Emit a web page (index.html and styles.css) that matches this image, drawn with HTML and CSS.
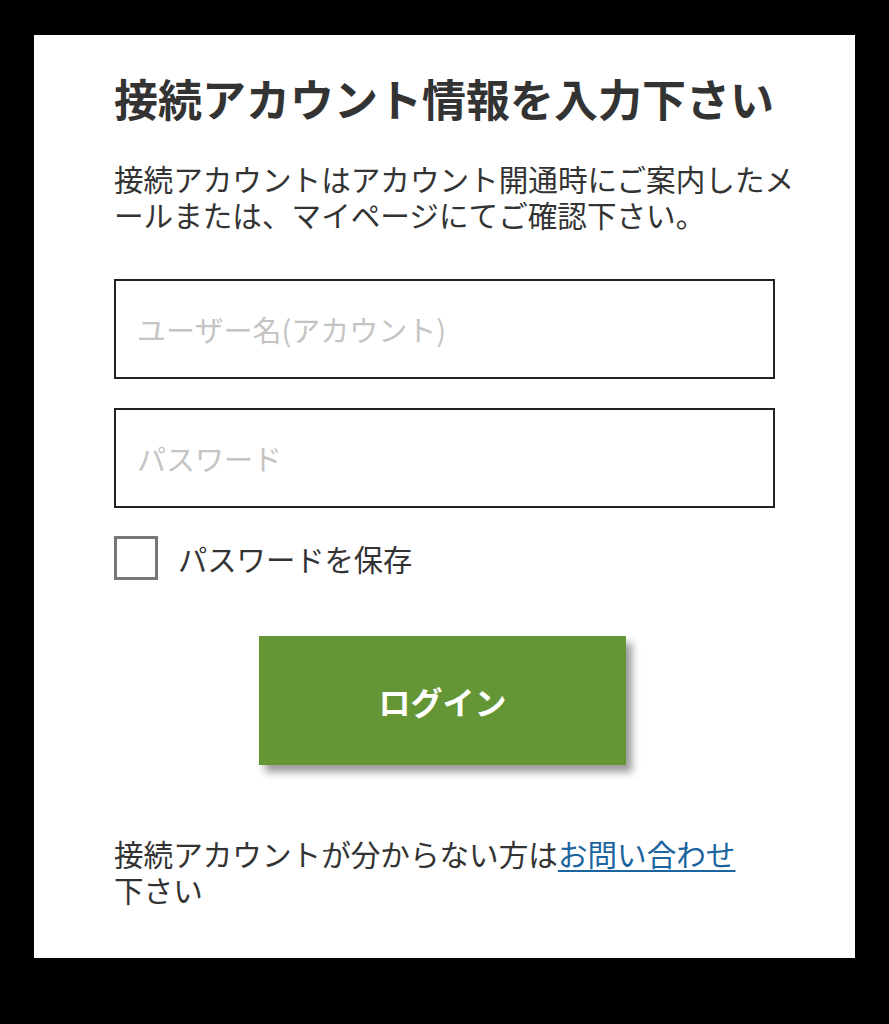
FILE: index.html
```html
<!DOCTYPE html>
<html lang="ja">
<head>
<meta charset="utf-8">
<title>ログイン</title>
<link rel="stylesheet" href="styles.css">
</head>
<body>
<main class="card">
  <div class="inner">
    <h1 class="title">接続アカウント情報を入力下さい</h1>
    <p class="lead">接続アカウントはアカウント開通時にご案内したメ<br>ールまたは、マイページにてご確認下さい。</p>
    <form class="form">
      <input class="field" type="text" placeholder="ユーザー名(アカウント)">
      <input class="field" type="password" placeholder="パスワード">
      <label class="save">
        <span class="box"></span>
        <span class="save-text">パスワードを保存</span>
      </label>
      <div class="actions">
        <button class="login" type="button">ログイン</button>
      </div>
    </form>
    <p class="foot">接続アカウントが分からない方は<a class="link" href="#">お問い合わせ</a><br>下さい</p>
  </div>
</main>
</body>
</html>
```

FILE: styles.css
```css
html, body {
  margin: 0;
  padding: 0;
  background: #000;
}
body {
  font-family: "Noto Sans CJK JP", "Noto Sans", sans-serif;
  color: #333;
  height: 1024px;
  overflow: hidden;
}
.card {
  margin: 35px 0 0 34px;
  width: 821px;
  height: 923px;
  background: #fff;
  box-sizing: border-box;
  padding: 36px 0 0 80px;
}
.inner {
  width: 700px;
}
.title {
  margin: 0;
  font-size: 44px;
  font-weight: 700;
  line-height: 54px;
  color: #333;
  letter-spacing: 0;
}
.lead {
  margin: 36px 0 0;
  font-size: 29.6px;
  line-height: 36px;
  color: #333;
}
.form {
  margin-top: 46px;
  width: 661px;
  display: flex;
  flex-direction: column;
}
.field {
  box-sizing: border-box;
  width: 661px;
  height: 100px;
  border: 2px solid #222;
  border-radius: 0;
  padding: 0 21px;
  font-family: "Noto Sans CJK JP", "Noto Sans", sans-serif;
  font-size: 29px;
  color: #333;
  background: #fff;
  outline: none;
  margin: 0;
}
.field + .field {
  margin-top: 29px;
}
.field::placeholder {
  color: #c4c4c4;
}
.save {
  margin-top: 28px;
  display: flex;
  align-items: center;
  gap: 20px;
}
.box {
  box-sizing: border-box;
  width: 44px;
  height: 44px;
  border: 3px solid #777;
  background: #fff;
}
.save-text {
  font-size: 29.3px;
  line-height: 44px;
  color: #333;
}
.actions {
  margin-top: 56px;
  display: flex;
  justify-content: center;
}
.login {
  width: 367px;
  height: 129px;
  margin-left: -4px;
  border: none;
  border-radius: 0;
  background: #659635;
  color: #fff;
  font-family: "Noto Sans CJK JP", "Noto Sans", sans-serif;
  font-size: 32px;
  font-weight: 700;
  box-shadow: 6px 7px 8px rgba(0, 0, 0, 0.4);
  cursor: pointer;
}
.foot {
  margin: 71px 0 0;
  font-size: 29.6px;
  line-height: 36px;
  color: #333;
}
.link {
  color: #1a64a0;
  text-decoration: underline;
  text-decoration-thickness: 2px;
  text-underline-offset: 4px;
}
```
